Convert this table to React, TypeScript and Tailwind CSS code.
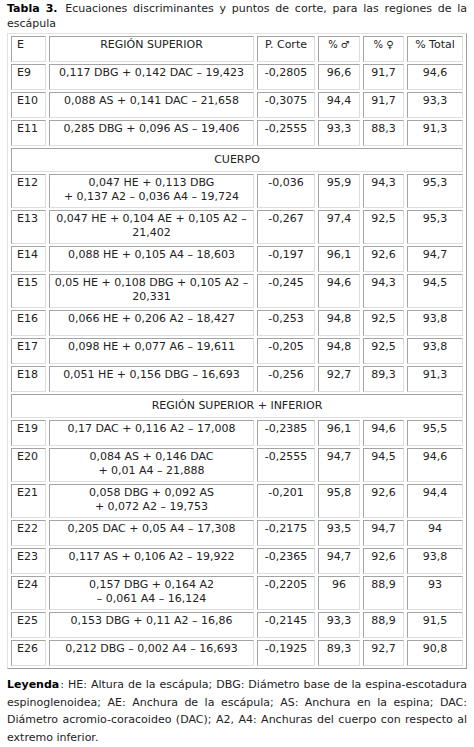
import React from 'react';

// Fila de la tabla: E, ecuación (líneas), punto de corte, % hombres, % mujeres, % total
type Fila = { id: string; ec: string[]; corte: string; h: string; m: string; total: string };
type Bloque = { titulo: string; filas: Fila[] };

const bloques: Bloque[] = [
  {
    titulo: 'REGIÓN SUPERIOR',
    filas: [
      { id: 'E9', ec: ['0,117 DBG + 0,142 DAC – 19,423'], corte: '-0,2805', h: '96,6', m: '91,7', total: '94,6' },
      { id: 'E10', ec: ['0,088 AS + 0,141 DAC – 21,658'], corte: '-0,3075', h: '94,4', m: '91,7', total: '93,3' },
      { id: 'E11', ec: ['0,285 DBG + 0,096 AS – 19,406'], corte: '-0,2555', h: '93,3', m: '88,3', total: '91,3' },
    ],
  },
  {
    titulo: 'CUERPO',
    filas: [
      { id: 'E12', ec: ['0,047 HE + 0,113 DBG', '+ 0,137 A2 – 0,036 A4 – 19,724'], corte: '-0,036', h: '95,9', m: '94,3', total: '95,3' },
      { id: 'E13', ec: ['0,047 HE + 0,104 AE + 0,105 A2 –', '21,402'], corte: '-0,267', h: '97,4', m: '92,5', total: '95,3' },
      { id: 'E14', ec: ['0,088 HE + 0,105 A4 – 18,603'], corte: '-0,197', h: '96,1', m: '92,6', total: '94,7' },
      { id: 'E15', ec: ['0,05 HE + 0,108 DBG + 0,105 A2 –', '20,331'], corte: '-0,245', h: '94,6', m: '94,3', total: '94,5' },
      { id: 'E16', ec: ['0,066 HE + 0,206 A2 – 18,427'], corte: '-0,253', h: '94,8', m: '92,5', total: '93,8' },
      { id: 'E17', ec: ['0,098 HE + 0,077 A6 – 19,611'], corte: '-0,205', h: '94,8', m: '92,5', total: '93,8' },
      { id: 'E18', ec: ['0,051 HE + 0,156 DBG – 16,693'], corte: '-0,256', h: '92,7', m: '89,3', total: '91,3' },
    ],
  },
  {
    titulo: 'REGIÓN SUPERIOR + INFERIOR',
    filas: [
      { id: 'E19', ec: ['0,17 DAC + 0,116 A2 – 17,008'], corte: '-0,2385', h: '96,1', m: '94,6', total: '95,5' },
      { id: 'E20', ec: ['0,084 AS + 0,146 DAC', '+ 0,01 A4 – 21,888'], corte: '-0,2555', h: '94,7', m: '94,5', total: '94,6' },
      { id: 'E21', ec: ['0,058 DBG + 0,092 AS', '+ 0,072 A2 – 19,753'], corte: '-0,201', h: '95,8', m: '92,6', total: '94,4' },
      { id: 'E22', ec: ['0,205 DAC + 0,05 A4 – 17,308'], corte: '-0,2175', h: '93,5', m: '94,7', total: '94' },
      { id: 'E23', ec: ['0,117 AS + 0,106 A2 – 19,922'], corte: '-0,2365', h: '94,7', m: '92,6', total: '93,8' },
      { id: 'E24', ec: ['0,157 DBG + 0,164 A2', '– 0,061 A4 – 16,124'], corte: '-0,2205', h: '96', m: '88,9', total: '93' },
      { id: 'E25', ec: ['0,153 DBG + 0,11 A2 – 16,86'], corte: '-0,2145', h: '93,3', m: '88,9', total: '91,5' },
      { id: 'E26', ec: ['0,212 DBG – 0,002 A4 – 16,693'], corte: '-0,1925', h: '89,3', m: '92,7', total: '90,8' },
    ],
  },
];

// borde "inset" de cada celda
const celda =
  'align-top h-[26px] pt-px pb-[3px] border border-t-[#a4a4a4] border-l-[#a4a4a4] border-b-[#dedede] border-r-[#dedede]';

const App: React.FC = () => {
  return (
    <div className="bg-white min-h-[747px] pl-[7px] pt-[1px] text-[#222] font-['DejaVu_Sans',Verdana,sans-serif] text-[11px]">
      <p className="w-[460px] leading-[15px] text-justify">
        <b className="text-black mr-[2px]">Tabla 3.</b> Ecuaciones discriminantes y puntos de corte, para las regiones de la escápula
      </p>

      <table className="mt-[2px] w-[460px] table-fixed border-separate border-spacing-x-[3px] border-spacing-y-[2px] border border-t-[#e2e2e2] border-l-[#e2e2e2] border-b-[#9c9c9c] border-r-[#9c9c9c] leading-[14px]">
        <colgroup>
          <col className="w-[35px]" />
          <col className="w-[205px]" />
          <col className="w-[58px]" />
          <col className="w-[42px]" />
          <col className="w-[41px]" />
          <col className="w-[56px]" />
        </colgroup>
        <tbody>
          {bloques.map((bloque, i) => (
            <React.Fragment key={bloque.titulo}>
              {i === 0 ? (
                <tr>
                  <td className={`${celda} text-left pl-[5px]`}>E</td>
                  <td className={`${celda} text-center`}>{bloque.titulo}</td>
                  <td className={`${celda} text-center`}>P. Corte</td>
                  <td className={`${celda} text-center text-[10px]`}>% ♂</td>
                  <td className={`${celda} text-center text-[10px]`}>% ♀</td>
                  <td className={`${celda} text-center`}>% Total</td>
                </tr>
              ) : (
                <tr>
                  <td
                    colSpan={6}
                    className="h-[24px] text-center align-middle border border-t-[#a4a4a4] border-l-[#a4a4a4] border-b-[#dedede] border-r-[#dedede]"
                  >
                    {bloque.titulo}
                  </td>
                </tr>
              )}
              {bloque.filas.map((f) => (
                <tr key={f.id}>
                  <td className={`${celda} text-left pl-[5px]`}>{f.id}</td>
                  <td className={`${celda} text-center whitespace-nowrap`}>
                    {f.ec.map((linea, k) => (
                      <div key={k}>{linea}</div>
                    ))}
                  </td>
                  <td className={`${celda} text-center`}>{f.corte}</td>
                  <td className={`${celda} text-center`}>{f.h}</td>
                  <td className={`${celda} text-center`}>{f.m}</td>
                  <td className={`${celda} text-center`}>{f.total}</td>
                </tr>
              ))}
            </React.Fragment>
          ))}
        </tbody>
      </table>

      <p className="mt-[7px] w-[460px] leading-[17.5px] text-justify">
        <b className="text-black mr-px">Leyenda</b>: HE: Altura de la escápula; DBG: Diámetro base de la espina-escotadura
        espinoglenoidea; AE: Anchura de la escápula; AS: Anchura en la espina; DAC: Diámetro acromio-coracoideo (DAC);
        A2, A4: Anchuras del cuerpo con respecto al extremo inferior.
      </p>
    </div>
  );
};

export default App;
